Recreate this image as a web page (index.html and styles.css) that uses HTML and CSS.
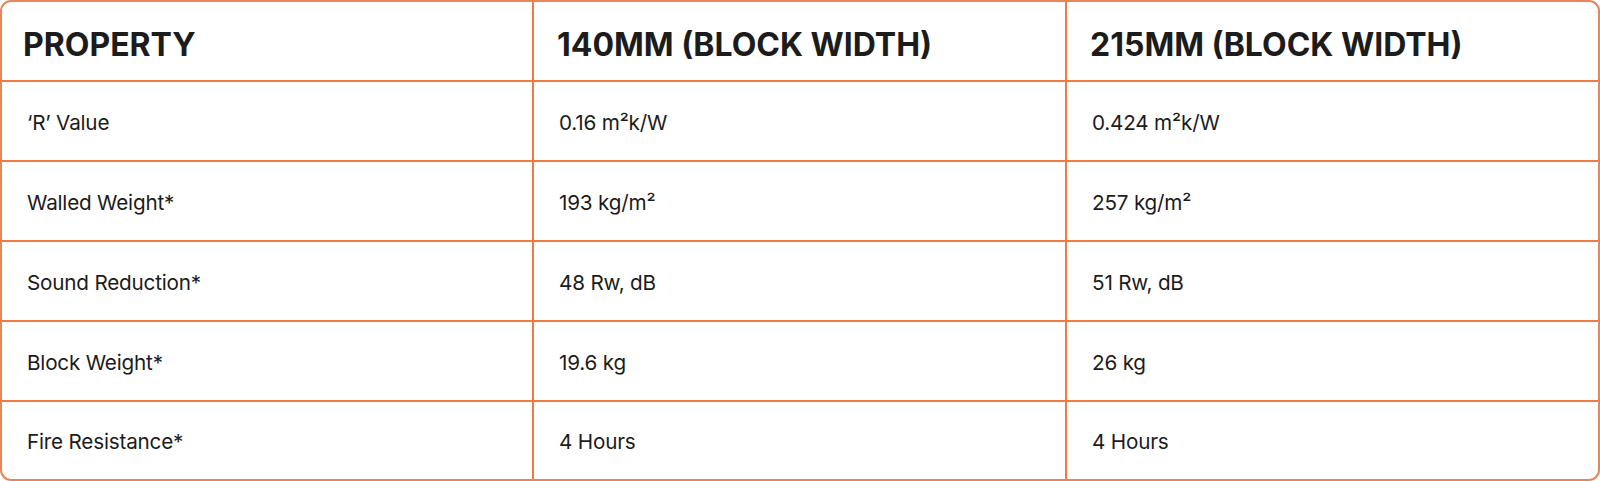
FILE: index.html
```html
<!DOCTYPE html>
<html>
<head>
<meta charset="utf-8">
<link rel="stylesheet" href="styles.css">
</head>
<body>
<div class="table">
  <div class="cell head">PROPERTY</div>
  <div class="cell head">140MM (BLOCK WIDTH)</div>
  <div class="cell head last">215MM (BLOCK WIDTH)</div>

  <div class="cell">‘R’ Value</div>
  <div class="cell">0.16 m²k/W</div>
  <div class="cell last">0.424 m²k/W</div>

  <div class="cell">Walled Weight*</div>
  <div class="cell">193 kg/m²</div>
  <div class="cell last">257 kg/m²</div>

  <div class="cell">Sound Reduction*</div>
  <div class="cell">48 Rw, dB</div>
  <div class="cell last">51 Rw, dB</div>

  <div class="cell">Block Weight*</div>
  <div class="cell">19.6 kg</div>
  <div class="cell last">26 kg</div>

  <div class="cell bottom">Fire Resistance*</div>
  <div class="cell bottom">4 Hours</div>
  <div class="cell bottom last">4 Hours</div>
</div>
</body>
</html>
```
FILE: styles.css
```css
html, body {
  margin: 0;
  padding: 0;
  background: #ffffff;
}
body {
  font-family: Inter, "Noto Sans", sans-serif;
  color: #1c1c1c;
}
.table {
  box-sizing: border-box;
  width: 1600px;
  height: 481px;
  border: 2px solid #e8865a;
  border-radius: 11px;
  display: grid;
  grid-template-columns: 532px 533px 1fr;
  grid-template-rows: 80px 80px 80px 80px 80px 1fr;
  overflow: hidden;
}
.cell {
  display: flex;
  align-items: center;
  padding-left: 25px;
  padding-top: 3px;
  font-size: 20.7px;
  font-weight: 400;
  border-right: 2px solid #f07a40;
  border-bottom: 2px solid #f07a40;
  letter-spacing: -0.2px;
}
.cell.last {
  border-right: none;
}
.cell.bottom {
  border-bottom: none;
  padding-top: 2px;
}
.cell.head {
  font-size: 32px;
  font-weight: 700;
  padding-left: 21px;
  padding-top: 6px;
  letter-spacing: 0;
}
.cell.head + .cell.head {
  padding-left: 23px;
}
```
